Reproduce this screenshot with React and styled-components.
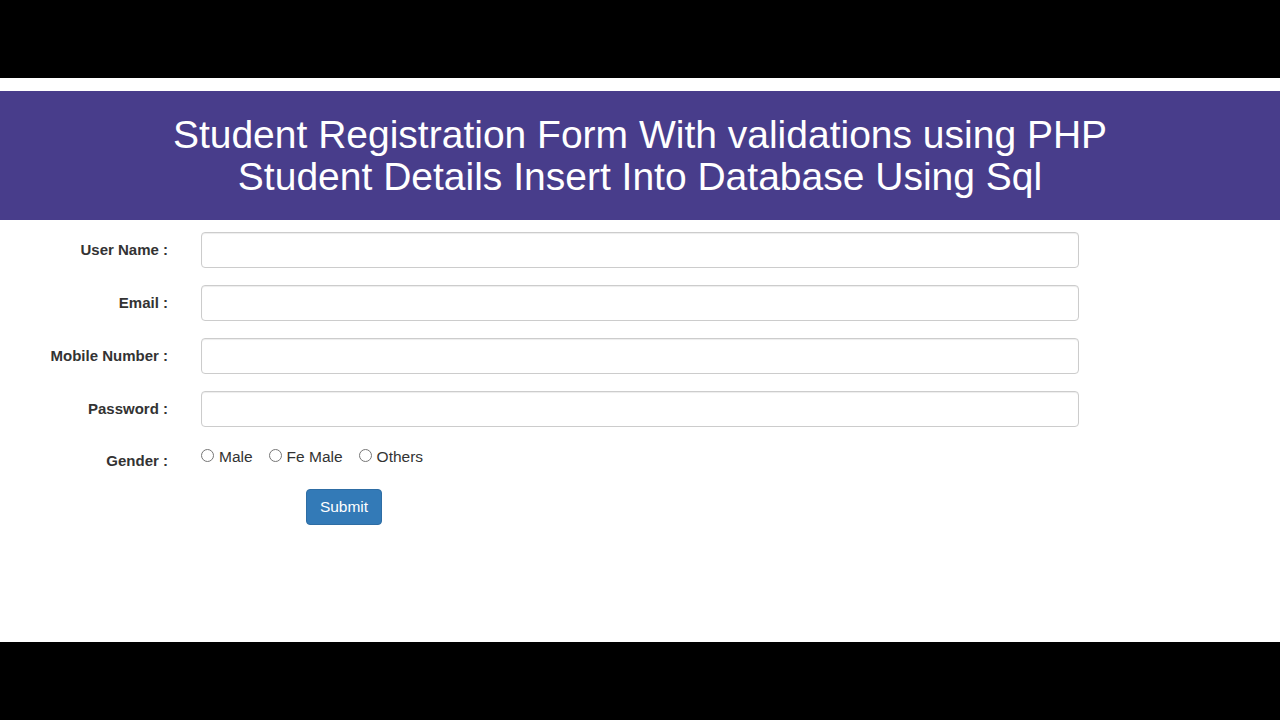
import React from 'react';
import styled, { createGlobalStyle } from 'styled-components';

const GlobalStyle = createGlobalStyle`
  html, body {
    margin: 0;
    padding: 0;
    background: #000;
  }
  * {
    box-sizing: border-box;
  }
`;

const Screen = styled.div`
  width: 1280px;
  height: 720px;
  background: #000;
  padding: 78px 0;
  overflow: hidden;
`;

const Page = styled.div`
  height: 564px;
  background: #fff;
  padding-top: 13px;
  font-family: 'Liberation Sans', Arial, sans-serif;
  color: #333;
`;

const Banner = styled.header`
  background: #483d8b;
  color: #fff;
  height: 129px;
  padding-top: 23px;
  text-align: center;
  h1 {
    margin: 0;
    font-weight: normal;
    font-size: 39px;
    line-height: 42px;
  }
`;

const Form = styled.form`
  display: flex;
  flex-direction: column;
  gap: 17px;
  padding-top: 12px;
`;

const Row = styled.div`
  display: grid;
  grid-template-columns: 168px 878px;
  column-gap: 33px;
  align-items: ${(props) => (props.top ? 'start' : 'center')};
  min-height: ${(props) => (props.top ? '28px' : '0')};
`;

const Label = styled.label`
  text-align: right;
  font-weight: bold;
  font-size: 15px;
  line-height: 20px;
  padding-top: ${(props) => (props.top ? '7px' : '0')};
`;

const Input = styled.input`
  height: 36px;
  width: 100%;
  border: 1px solid #ccc;
  border-radius: 4px;
  box-shadow: inset 0 1px 1px rgba(0, 0, 0, 0.075);
  font-size: 15px;
  padding: 6px 12px;
`;

const Radios = styled.div`
  display: flex;
  gap: 16px;
  padding-top: 3px;
`;

const RadioOption = styled.label`
  display: flex;
  align-items: center;
  gap: 5px;
  font-size: 15.5px;
  line-height: 20px;
  input {
    margin: 0 0 3px;
    width: 13px;
    height: 13px;
  }
`;

const Actions = styled.div`
  padding-left: 306px;
`;

const SubmitButton = styled.button`
  background: #337ab7;
  border: 1px solid #2e6da4;
  border-radius: 4px;
  color: #fff;
  font-family: 'Liberation Sans', Arial, sans-serif;
  font-size: 15.5px;
  height: 36px;
  width: 76px;
  padding: 0;
`;

const fields = ['User Name :', 'Email :', 'Mobile Number :', 'Password :'];

export default function App() {
  return (
    <>
      <GlobalStyle />
      <Screen>
        <Page>
          <Banner>
            <h1>Student Registration Form With validations using PHP</h1>
            <h1>Student Details Insert Into Database Using Sql</h1>
          </Banner>
          <Form onSubmit={(e) => e.preventDefault()}>
            {fields.map((f) => (
              <Row key={f}>
                <Label>{f}</Label>
                <Input type={f === 'Password :' ? 'password' : 'text'} />
              </Row>
            ))}
            <Row top>
              <Label top>Gender :</Label>
              <Radios>
                <RadioOption>
                  <input type='radio' name='gender' /> Male
                </RadioOption>
                <RadioOption>
                  <input type='radio' name='gender' /> Fe Male
                </RadioOption>
                <RadioOption>
                  <input type='radio' name='gender' /> Others
                </RadioOption>
              </Radios>
            </Row>
            <Actions>
              <SubmitButton type='submit'>Submit</SubmitButton>
            </Actions>
          </Form>
        </Page>
      </Screen>
    </>
  );
}
